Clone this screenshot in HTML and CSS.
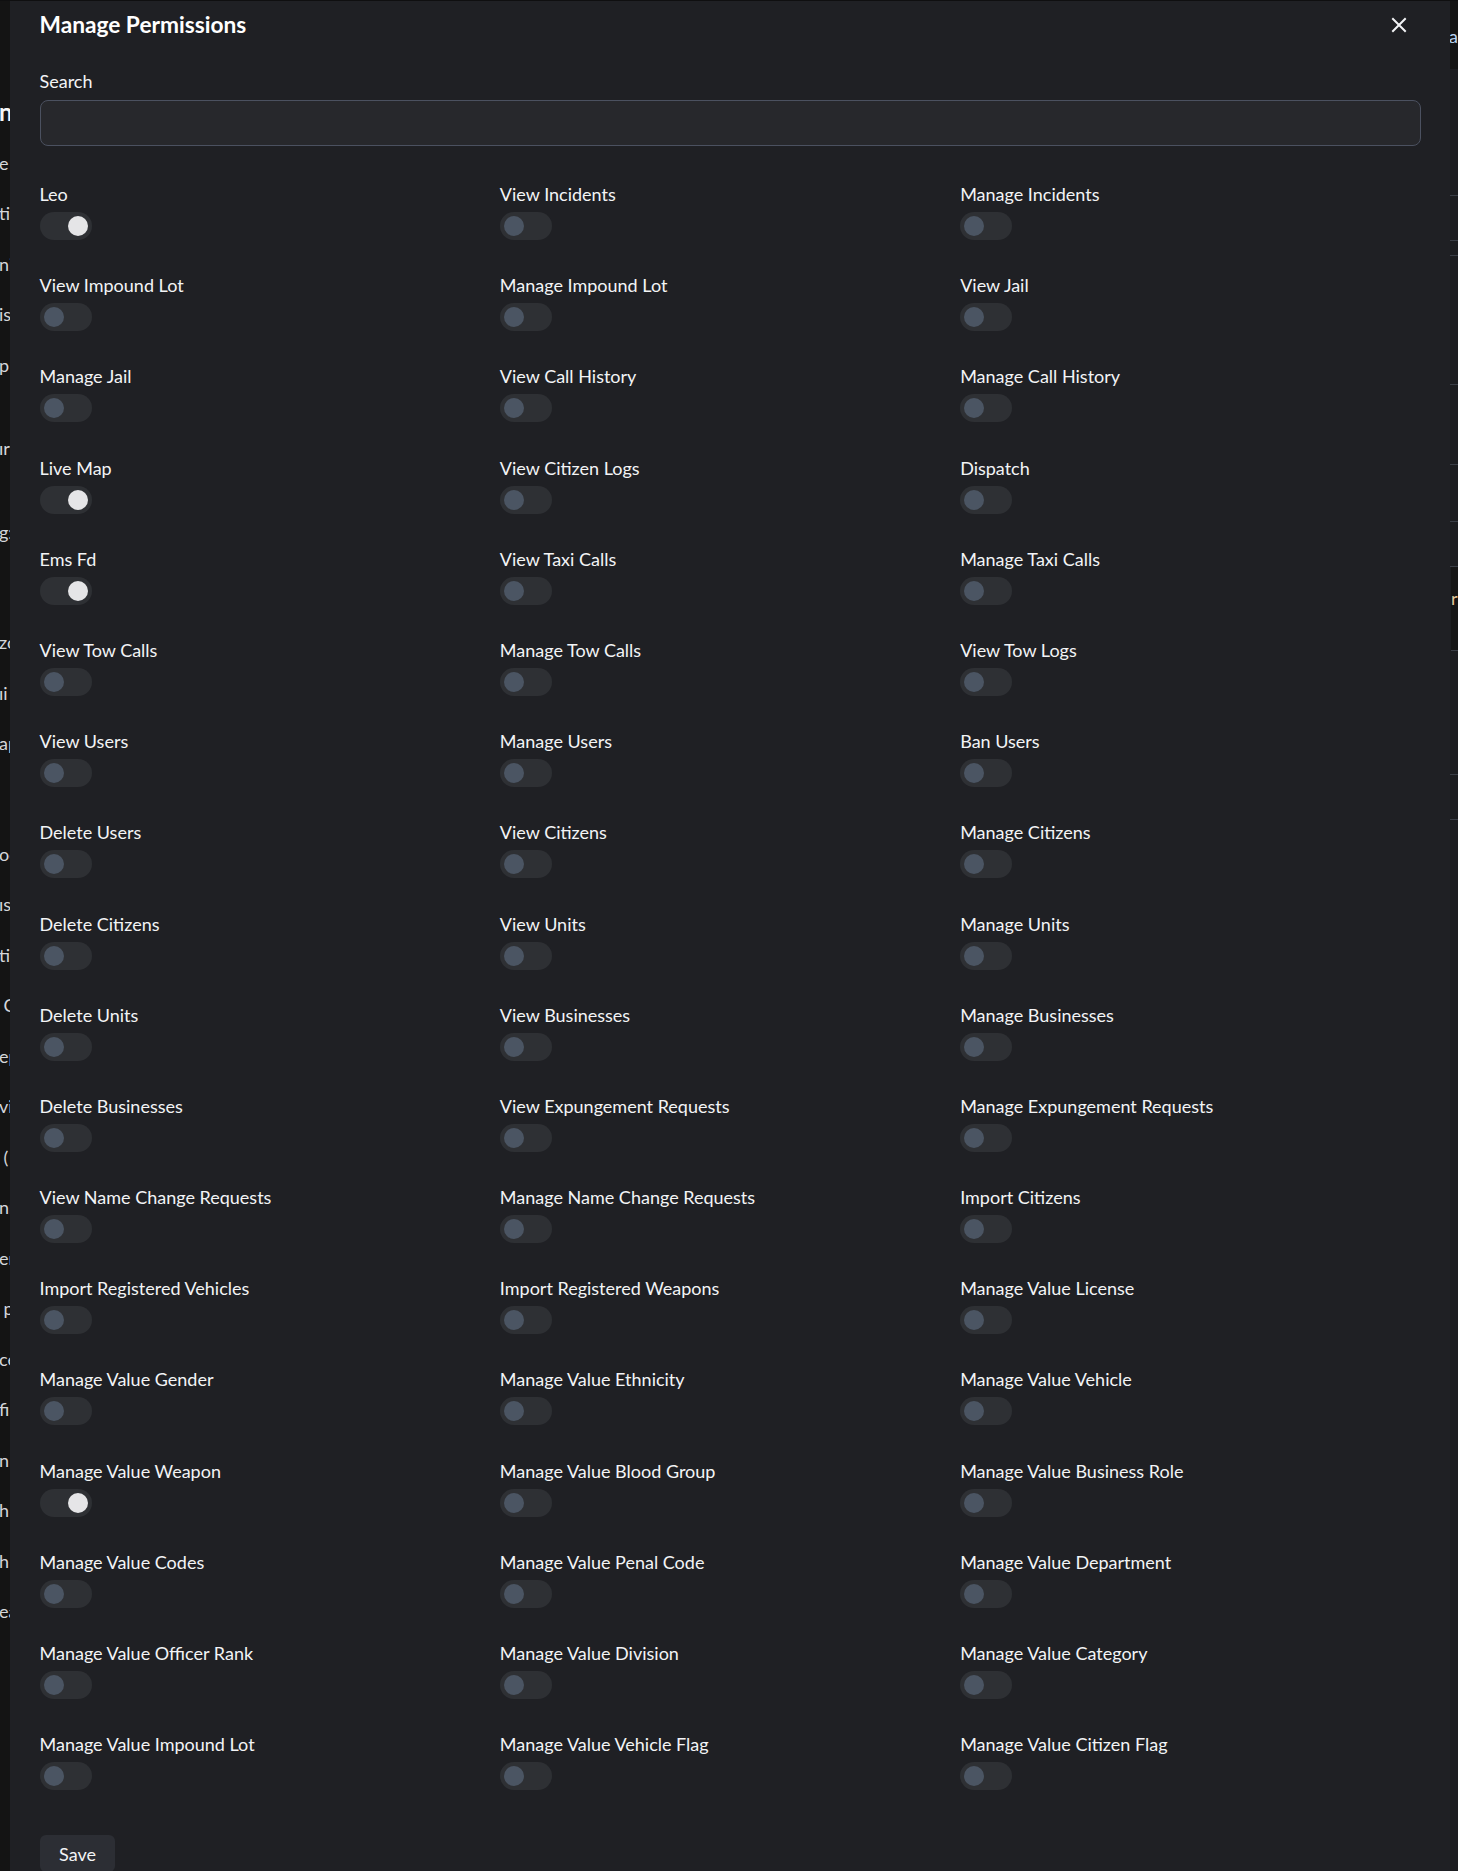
FILE: index.html
```html
<!DOCTYPE html>
<html lang="en">
<head>
<meta charset="utf-8">
<title>Manage Permissions</title>
<link rel="stylesheet" href="styles.css">
</head>
<body>
<div class="page">
  <aside class="sidebar" aria-hidden="true">
    <div class="frag frag-head">n</div>
    <div class="frag">e</div>
    <div class="frag">ti:</div>
    <div class="frag">ni</div>
    <div class="frag">is</div>
    <div class="frag">p</div>
    <div class="frag sp1">ır</div>
    <div class="frag sp1">g:</div>
    <div class="frag sp2">zo</div>
    <div class="frag">ıi</div>
    <div class="frag">ap</div>
    <div class="frag sp2">oc</div>
    <div class="frag">ıs</div>
    <div class="frag">ti:</div>
    <div class="frag">&nbsp;C</div>
    <div class="frag">ep</div>
    <div class="frag">vi</div>
    <div class="frag">&nbsp;(</div>
    <div class="frag">nı</div>
    <div class="frag">er</div>
    <div class="frag">&nbsp;p</div>
    <div class="frag">ce</div>
    <div class="frag">fi</div>
    <div class="frag">n</div>
    <div class="frag">h</div>
    <div class="frag">h</div>
    <div class="frag">ea</div>
  </aside>
  <section class="rightside" aria-hidden="true">
    <div class="rs-top">a</div>
    <div class="rs-row rs-h127"></div>
    <div class="rs-row rs-h45"></div>
    <div class="rs-row rs-h15"></div>
    <div class="rs-row rs-h129"></div>
    <div class="rs-row rs-h80"></div>
    <div class="rs-row rs-h57"></div>
    <div class="rs-row rs-h45"></div>
    <div class="rs-row rs-dark">r</div>
    <div class="rs-row rs-h124"></div>
    <div class="rs-row rs-h45"></div>
  </section>
</div>

<div class="modal" role="dialog" aria-label="Manage Permissions">
  <header class="modal-header">
    <h1 class="modal-title">Manage Permissions</h1>
    <button class="close-btn" aria-label="Close">
      <svg viewBox="0 0 16 16" width="16" height="16"><path d="M2 2 L14 14 M14 2 L2 14" stroke="#f3f4f6" stroke-width="2" stroke-linecap="square" fill="none"/></svg>
    </button>
  </header>

  <label class="field-label" for="search">Search</label>
  <input id="search" class="search-input" type="text">

  <div class="perm-grid" id="grid"></div>

  <button class="save-btn">Save</button>
</div>

<script src="app.js"></script>
</body>
</html>
```

FILE: app.js
```js
const perms = [
  ["Leo", true], ["View Incidents", false], ["Manage Incidents", false],
  ["View Impound Lot", false], ["Manage Impound Lot", false], ["View Jail", false],
  ["Manage Jail", false], ["View Call History", false], ["Manage Call History", false],
  ["Live Map", true], ["View Citizen Logs", false], ["Dispatch", false],
  ["Ems Fd", true], ["View Taxi Calls", false], ["Manage Taxi Calls", false],
  ["View Tow Calls", false], ["Manage Tow Calls", false], ["View Tow Logs", false],
  ["View Users", false], ["Manage Users", false], ["Ban Users", false],
  ["Delete Users", false], ["View Citizens", false], ["Manage Citizens", false],
  ["Delete Citizens", false], ["View Units", false], ["Manage Units", false],
  ["Delete Units", false], ["View Businesses", false], ["Manage Businesses", false],
  ["Delete Businesses", false], ["View Expungement Requests", false], ["Manage Expungement Requests", false],
  ["View Name Change Requests", false], ["Manage Name Change Requests", false], ["Import Citizens", false],
  ["Import Registered Vehicles", false], ["Import Registered Weapons", false], ["Manage Value License", false],
  ["Manage Value Gender", false], ["Manage Value Ethnicity", false], ["Manage Value Vehicle", false],
  ["Manage Value Weapon", true], ["Manage Value Blood Group", false], ["Manage Value Business Role", false],
  ["Manage Value Codes", false], ["Manage Value Penal Code", false], ["Manage Value Department", false],
  ["Manage Value Officer Rank", false], ["Manage Value Division", false], ["Manage Value Category", false],
  ["Manage Value Impound Lot", false], ["Manage Value Vehicle Flag", false], ["Manage Value Citizen Flag", false]
];
const grid = document.getElementById("grid");
perms.forEach(([name, on]) => {
  const item = document.createElement("div");
  item.className = "perm";
  const label = document.createElement("span");
  label.className = "perm-label";
  label.textContent = name;
  const sw = document.createElement("button");
  sw.className = "switch" + (on ? " on" : "");
  sw.setAttribute("role", "switch");
  sw.setAttribute("aria-checked", on ? "true" : "false");
  sw.setAttribute("aria-label", name);
  const knob = document.createElement("span");
  knob.className = "knob";
  sw.appendChild(knob);
  item.appendChild(label);
  item.appendChild(sw);
  grid.appendChild(item);
});
```

FILE: styles.css
```css
* { box-sizing: border-box; }

html, body {
  margin: 0;
  padding: 0;
  background: #0f0f10;
  font-family: "Lato", "Liberation Sans", sans-serif;
  color: #f3f4f6;
  overflow: hidden;
}

.page {
  display: flex;
  justify-content: space-between;
  height: 1871px;
  padding-top: 1px;
}

.sidebar {
  width: 10px;
  background: #141414;
  overflow: hidden;
  padding-top: 86px;
  display: flex;
  flex-direction: column;
}

.frag {
  height: 50.5px;
  line-height: 50.5px;
  font-size: 18px;
  color: #d4d6da;
  white-space: nowrap;
  margin-left: -1px;
  flex: none;
}

.frag-head {
  font-size: 24px;
  font-weight: 700;
  color: #f5f5f5;
}

.frag.sp1 { margin-top: 33px; }
.frag.sp2 { margin-top: 60px; }

.rightside {
  width: 8px;
  background: #1c1d20;
  overflow: hidden;
  display: flex;
  flex-direction: column;
}

.rs-top {
  height: 68px;
  background: #141414;
  font-size: 18px;
  color: #b9d3f0;
  line-height: 70px;
  margin-left: -1px;
  flex: none;
  overflow: hidden;
}

.rs-row {
  border-bottom: 1px solid #3a3e46;
  flex: none;
}
.rs-h127 { height: 127px; }
.rs-h45 { height: 45px; }
.rs-h15 { height: 15px; }
.rs-h129 { height: 129px; }
.rs-h80 { height: 80px; }
.rs-h57 { height: 57px; }
.rs-h124 { height: 124px; }
.rs-dark {
  height: 84px;
  background: #151515;
  color: #e3c79a;
  font-size: 18px;
  line-height: 62px;
  margin-left: 1px;
}

.modal {
  position: absolute;
  top: 1px;
  left: 10px;
  width: 1440px;
  height: 1870px;
  background: #1f2024;
  padding: 10px 29.5px 0 29.5px;
  overflow: hidden;
}

.modal-header {
  display: flex;
  align-items: center;
  justify-content: space-between;
  height: 28px;
}

.modal-title {
  margin: 0;
  font-size: 22.7px;
  line-height: 28px;
  font-weight: 700;
  color: #ffffff;
}

.close-btn {
  width: 16px;
  height: 16px;
  padding: 0;
  margin-right: 13.5px;
  border: 0;
  background: none;
  display: flex;
}

.field-label {
  display: block;
  margin-top: 31px;
  font-size: 18px;
  line-height: 22px;
}

.search-input {
  display: block;
  width: 100%;
  height: 46px;
  margin-top: 8px;
  background: #27282c;
  border: 1px solid #4b5160;
  border-radius: 8px;
  color: #f3f4f6;
  font: inherit;
  font-size: 18px;
  padding: 0 12px;
  outline: none;
}

.perm-grid {
  margin-top: 37px;
  display: grid;
  grid-template-columns: repeat(3, 1fr);
  row-gap: 34.2px;
}

.perm {
  display: flex;
  flex-direction: column;
  align-items: flex-start;
}

.perm-label {
  font-size: 18px;
  line-height: 22px;
  white-space: nowrap;
}

.switch {
  margin-top: 7px;
  width: 52px;
  height: 28px;
  border-radius: 14px;
  border: 0;
  padding: 0;
  background: #2e3034;
  position: relative;
}

.knob {
  position: absolute;
  top: 4px;
  left: 4px;
  width: 20px;
  height: 20px;
  border-radius: 50%;
  background: #4b5563;
}

.switch.on .knob {
  left: 28px;
  background: #e5e5e7;
}

.save-btn {
  display: block;
  margin-top: 45px;
  padding: 8px 19.5px 7px;
  background: #2c2e34;
  border: 0;
  border-radius: 6px;
  color: #f3f4f6;
  font: inherit;
  font-size: 18px;
  line-height: 22px;
}
```
